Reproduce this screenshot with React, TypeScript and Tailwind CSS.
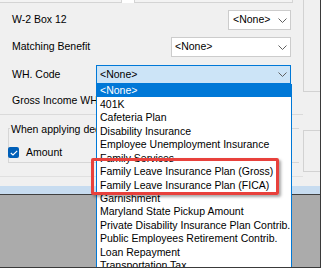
import React from "react";

const Chevron = () => (
  <svg width="9" height="5" viewBox="0 0 9 5" className="shrink-0">
    <path d="M0.5 0.5 L4.5 4.5 L8.5 0.5" fill="none" stroke="#606060" strokeWidth="1" />
  </svg>
);

const items = [
  "<None>",
  "401K",
  "Cafeteria Plan",
  "Disability Insurance",
  "Employee Unemployment Insurance",
  "Family Services",
  "Family Leave Insurance Plan (Gross)",
  "Family Leave Insurance Plan (FICA)",
  "Garnishment",
  "Maryland State Pickup Amount",
  "Private Disability Insurance Plan Contrib.",
  "Public Employees Retirement Contrib.",
  "Loan Repayment",
  "Transportation Tax",
];

export default function App() {
  return (
    <div
      className="relative w-[321px] h-[268px] overflow-hidden bg-[#f0f0f0] border-r border-b border-[#3a3a3a] text-[10.5px] text-black flex flex-col"
      style={{ fontFamily: '"Liberation Sans", Arial, sans-serif' }}
    >
      <div className="flex h-[186px]">
        {/* left column */}
        <div className="w-[303px] flex flex-col">
          <div className="flex h-[3px]">
            <div className="w-[122px] border-b border-r border-[#d4d4d4] bg-[#f3f3f3]" />
            <div className="w-[12px] bg-white" />
            <div className="w-[159px] border-b border-r border-l border-[#d4d4d4] bg-[#f3f3f3]" />
          </div>
          <div className="mt-[7px] h-[20px] flex items-center justify-between pl-[12px] pr-[12px]">
            <span>W-2 Box 12</span>
            <div className="w-[63px] h-[20px] bg-white border border-[#cccccc] flex items-center justify-between pl-[4px] pr-[3px]">
              <span>&lt;None&gt;</span>
              <Chevron />
            </div>
          </div>
          <div className="mt-[7px] h-[20px] flex items-center justify-between pl-[12px] pr-[12px]">
            <span>Matching Benefit</span>
            <div className="w-[120px] h-[20px] bg-white border border-[#cccccc] flex items-center justify-between pl-[3px] pr-[3px]">
              <span>&lt;None&gt;</span>
              <Chevron />
            </div>
          </div>
          <div className="mt-[8px] h-[19px] flex items-center justify-between pl-[12px] pr-[12px]">
            <span>WH. Code</span>
            <div className="w-[195px] h-[19px] bg-[#cce4f7] border border-[#0078d7] flex items-center justify-between pl-[3px] pr-[3px]">
              <span>&lt;None&gt;</span>
              <Chevron />
            </div>
          </div>
          <div className="mt-[7px] h-[20px] flex items-center pl-[12px]">
            <span className="whitespace-nowrap">Gross Income WH Code</span>
          </div>
          <div className="mt-[3px] border-t border-[#dadada]" />
          <div className="mt-[13px] ml-[8px] mr-[4px] h-[35px] border-t border-l border-b border-[#d6d6d6] relative">
            <span className="absolute -top-[7px] left-[1px] bg-[#f0f0f0] px-[1px] whitespace-nowrap">
              When applying deductions
            </span>
            <div className="mt-[16px] ml-[-1px] flex items-center gap-[7px]">
              <div className="w-[11px] h-[11px] rounded-[2px] bg-[#005fb8] flex items-center justify-center">
                <svg width="8" height="6" viewBox="0 0 8 6">
                  <path d="M0.8 3 L3 5 L7.2 0.8" fill="none" stroke="white" strokeWidth="1.1" />
                </svg>
              </div>
              <span>Amount</span>
            </div>
          </div>
          <div className="mt-[13px] border-t border-[#e0e0e0]" />
        </div>
        {/* right strip */}
        <div className="flex-1 flex flex-col">
          <div className="h-[92px] border-l border-b border-[#d2d2d2]" />
          <div className="mt-[38px] h-[42px] border-l border-t border-b border-[#d2d2d2]" />
        </div>
      </div>
      <div className="h-[8px] bg-[#c7dcf0]" />
      <div className="h-[1px] bg-[#3f3f3f]" />
      <div className="flex-1 bg-[#ababab]" />

      {/* dropdown list */}
      <div className="absolute left-[96px] top-[84px] w-[196px] h-[190px] bg-white border-l border-r border-[#0078d7] flex flex-col">
        {items.map((t, i) => (
          <div
            key={i}
            className={
              "h-[13.45px] shrink-0 flex items-center pl-[3px] whitespace-nowrap leading-none " +
              (i === 0 ? "bg-[#0078d7] text-white" : "text-black")
            }
          >
            {t}
          </div>
        ))}
      </div>

      {/* red highlight */}
      <div className="absolute left-[91px] top-[158px] w-[188px] h-[37px] border-[3px] border-[#e8413c] rounded-[2px] shadow-[2px_2px_3px_rgba(0,0,0,0.35)]" />
    </div>
  );
}
